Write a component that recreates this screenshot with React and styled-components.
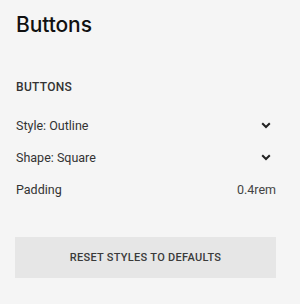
import React from "react";
import styled, { createGlobalStyle } from "styled-components";

const Global = createGlobalStyle`
  html, body { margin: 0; padding: 0; background: #f5f5f5; }
  body { font-family: Roboto, "Noto Sans", sans-serif; -webkit-font-smoothing: antialiased; }
`;

const Panel = styled.div`
  width: 300px;
  height: 304px;
  box-sizing: border-box;
  background: #f5f5f5;
  padding: 12px 24px 0 16px;
  display: flex;
  flex-direction: column;
`;

const Title = styled.h1`
  margin: 0;
  font-family: Inter, "Noto Sans", sans-serif;
  font-size: 21px;
  line-height: 26px;
  font-weight: 500;
  color: #111;
  letter-spacing: -0.1px;
`;

const SectionLabel = styled.h2`
  margin: 41px 0 0;
  font-size: 12px;
  line-height: 16px;
  font-weight: 500;
  color: #333;
  letter-spacing: 0.3px;
`;

const Rows = styled.div`
  margin-top: 14px;
  display: flex;
  flex-direction: column;
`;

const Row = styled.div`
  height: 32px;
  display: flex;
  align-items: center;
  justify-content: space-between;
  font-size: 12.5px;
  color: #333;
`;

const Value = styled.span`
  color: #444;
`;

const Chevron = () => (
  <svg width="10" height="7" viewBox="0 0 10 7" style={{ marginRight: 5 }}>
    <path d="M1.2 1.2 L5 5 L8.8 1.2" fill="none" stroke="#222" strokeWidth="2" />
  </svg>
);

const ResetButton = styled.button`
  margin: 32px 0 0 -1px;
  width: 261px;
  height: 41px;
  border: none;
  background: #e6e6e6;
  font-family: inherit;
  font-size: 11px;
  font-weight: 500;
  color: #3a3a3a;
  letter-spacing: 0.3px;
  cursor: pointer;
`;

export default function App() {
  return (
    <>
      <Global />
      <Panel>
        <Title>Buttons</Title>
        <SectionLabel>BUTTONS</SectionLabel>
        <Rows>
          <Row>
            <span>Style: Outline</span>
            <Chevron />
          </Row>
          <Row>
            <span>Shape: Square</span>
            <Chevron />
          </Row>
          <Row>
            <span>Padding</span>
            <Value>0.4rem</Value>
          </Row>
        </Rows>
        <ResetButton>RESET STYLES TO DEFAULTS</ResetButton>
      </Panel>
    </>
  );
}
